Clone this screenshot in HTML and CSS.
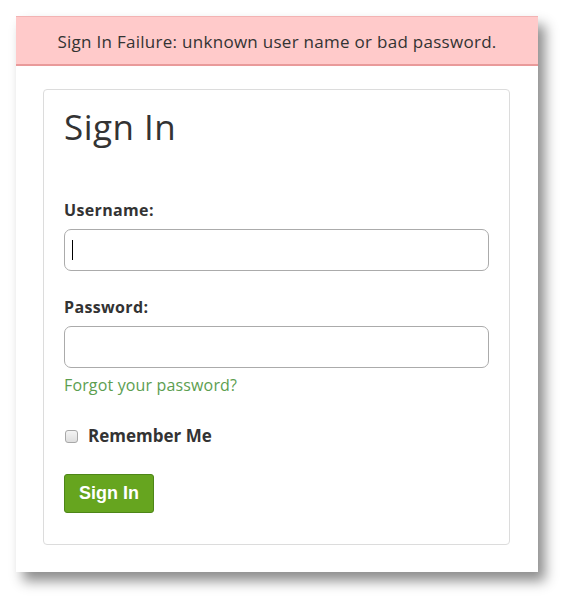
FILE: index.html
```html
<!DOCTYPE html>
<html>
<head>
<meta charset="utf-8">
<link rel="stylesheet" href="styles.css">
</head>
<body>
<div class="window">
  <div class="banner">Sign In Failure: unknown user name or bad password.</div>
  <div class="content">
    <form class="card">
      <h1 class="title">Sign In</h1>
      <label class="label" for="u">Username:</label>
      <div class="input focused"><span class="caret"></span></div>
      <label class="label pw" for="p">Password:</label>
      <div class="input"></div>
      <a class="forgot" href="#">Forgot your password?</a>
      <div class="remember"><span class="check"></span><span class="rlabel">Remember Me</span></div>
      <button class="btn" type="button">Sign In</button>
    </form>
  </div>
</div>
</body>
</html>
```

FILE: styles.css
```css
html, body {
  margin: 0;
  padding: 0;
  background: #ffffff;
}
body {
  padding: 16px 0 27px 16px;
  font-family: "Open Sans", Lato, sans-serif;
  color: #333;
}
.window {
  width: 522px;
  height: 556px;
  background: #fff;
  box-shadow: 7px 9px 12px rgba(0,0,0,0.45);
  display: flex;
  flex-direction: column;
}
.banner {
  height: 50px;
  box-sizing: border-box;
  background: #ffcaca;
  border-top: 1px solid #f2b3b3;
  border-bottom: 2px solid #e99a9a;
  display: flex;
  align-items: center;
  justify-content: center;
  font-size: 17px;
  letter-spacing: 0.28px;
  color: #333;
  padding-top: 1px;
}
.content {
  padding: 23px 28px 0 27px;
}
.card {
  margin: 0;
  width: 467px;
  height: 456px;
  box-sizing: border-box;
  border: 1px solid #dcdcdc;
  border-radius: 4px;
  padding: 13px 20px 0 20px;
  display: flex;
  flex-direction: column;
}
.title {
  margin: 0;
  font-weight: 400;
  font-size: 35px;
  letter-spacing: 0.5px;
  line-height: 48px;
  color: #333;
}
.label {
  font-weight: 700;
  font-size: 16px;
  letter-spacing: 0.35px;
  line-height: 22px;
  margin-top: 48px;
  color: #333;
}
.label.pw {
  margin-top: 25px;
}
.input {
  margin-top: 8px;
  height: 42px;
  box-sizing: border-box;
  border: 1px solid #ababab;
  border-radius: 7px;
  background: #fff;
  position: relative;
}
.caret {
  position: absolute;
  left: 7px;
  top: 10px;
  width: 1px;
  height: 20px;
  background: #000;
}
.forgot {
  margin-top: 7px;
  font-size: 16px;
  letter-spacing: 0.15px;
  line-height: 20px;
  color: #5c9e50;
  text-decoration: none;
}
.remember {
  margin-top: 31px;
  display: flex;
  align-items: center;
  height: 20px;
}
.check {
  width: 13px;
  height: 13px;
  box-sizing: border-box;
  border: 1px solid #a8a8a8;
  border-radius: 3px;
  background: linear-gradient(#f4f4f4, #dedede);
  margin-left: 1px;
  margin-right: 10px;
}
.rlabel {
  font-weight: 700;
  font-size: 17px;
  line-height: 20px;
  color: #333;
}
.btn {
  margin-top: 28px;
  align-self: flex-start;
  width: 90px;
  height: 39px;
  background: #66a51f;
  border: 1px solid #4d8617;
  border-radius: 3px;
  color: #fff;
  font-family: "Liberation Sans", Arial, sans-serif;
  font-weight: 700;
  font-size: 18px;
  padding: 0;
}
```
